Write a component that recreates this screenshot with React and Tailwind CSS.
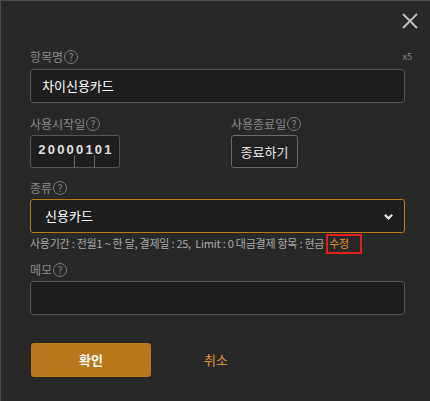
import React from "react";

const Help = () => (
  <span className="inline-flex items-center justify-center w-[14px] h-[14px] ml-[1px] rounded-full border border-[#7a7a7a] text-[10px] leading-none text-[#8a8a8a]">
    ?
  </span>
);

const Label = ({ children }) => (
  <div className="flex items-center h-[16px] text-[12px] text-[#8a8a8a]">
    {children}
    <Help />
  </div>
);

const App = () => {
  return (
    <div
      className="relative w-[430px] h-[401px] bg-[#282828] border-t border-l border-[#4a4a4a] overflow-hidden"
      style={{ fontFamily: '"Noto Sans CJK KR", "Noto Sans", sans-serif' }}
    >
      {/* close */}
      <button className="absolute top-[11px] right-[11px] w-[18px] h-[18px] text-[#bdbdbd]">
        <svg viewBox="0 0 18 18" width="18" height="18" fill="none" stroke="currentColor" strokeWidth="2">
          <path d="M2 2 L16 16 M16 2 L2 16" />
        </svg>
      </button>

      <div className="pl-[29px] pr-[25px] pt-[48px]">
        {/* 항목명 */}
        <div className="flex items-end justify-between">
          <Label>항목명</Label>
          <span className="text-[9px] text-[#8a8a8a] mr-[-7px] mb-[2px]">x5</span>
        </div>
        <div className="mt-[4px] h-[34px] rounded-[3px] border border-[#555] bg-[#1e1e1e] flex items-center px-[11px] text-[13px] text-white">
          차이신용카드
        </div>

        {/* dates */}
        <div className="mt-[13px] flex">
          <div className="w-[201px]">
            <Label>사용시작일</Label>
            <div className="relative mt-[3px] w-[90px] h-[33px] rounded-[3px] border border-[#555] bg-[#1e1e1e] flex items-center justify-center">
              <span
                className="text-[13px] font-bold tracking-[2.2px] text-[#e0e0e0] mb-[3px] ml-[2px]"
                style={{ fontFamily: '"Liberation Sans", sans-serif' }}
              >
                20000101
              </span>
              <span className="absolute left-[43px] bottom-0 w-px h-[12px] bg-[#666]" />
              <span className="absolute left-[63px] bottom-0 w-px h-[12px] bg-[#666]" />
            </div>
          </div>
          <div>
            <Label>사용종료일</Label>
            <button className="mt-[3px] w-[67px] h-[33px] rounded-[3px] border border-[#6a6a6a] bg-[#222] text-[13px] text-[#e8e8e8]">
              종료하기
            </button>
          </div>
        </div>

        {/* 종류 */}
        <div className="mt-[12px]">
          <Label>종류</Label>
        </div>
        <div className="mt-[3px] h-[34px] rounded-[3px] border border-[#b8791a] bg-[#1e1e1e] flex items-center justify-between pl-[14px] pr-[10px] text-[13px] text-white">
          <span>신용카드</span>
          <svg viewBox="0 0 12 12" width="11" height="11" fill="none" stroke="#e8e8e8" strokeWidth="2.4">
            <path d="M2 4 L6 8 L10 4" />
          </svg>
        </div>
        <div className="mt-0 h-[21px] flex items-center text-[11px] text-[#a8a8a8] whitespace-nowrap tracking-[-0.25px]">
          <span>사용기간 : 전월1 ~ 한 달, 결제일 : 25,&nbsp; Limit : 0 대금결제 항목 : 현금</span>
          <span className="ml-[2px] h-[20px] w-[36px] flex items-center border-2 border-[#e0201f] text-[#e39a2a] pl-[1px]">
            수정
          </span>
        </div>

        {/* 메모 */}
        <div className="mt-[8px]">
          <Label>메모</Label>
        </div>
        <div className="mt-[3px] h-[34px] rounded-[3px] border border-[#555] bg-[#1e1e1e]" />

        {/* buttons */}
        <div className="mt-[28px] flex items-center">
          <button className="ml-[1px] w-[120px] h-[34px] rounded-[3px] bg-[#b8771a] text-[13px] font-bold text-white">
            확인
          </button>
          <button className="ml-[53px] text-[13px] text-[#e39a2a]">취소</button>
        </div>
      </div>
    </div>
  );
};

export default App;
